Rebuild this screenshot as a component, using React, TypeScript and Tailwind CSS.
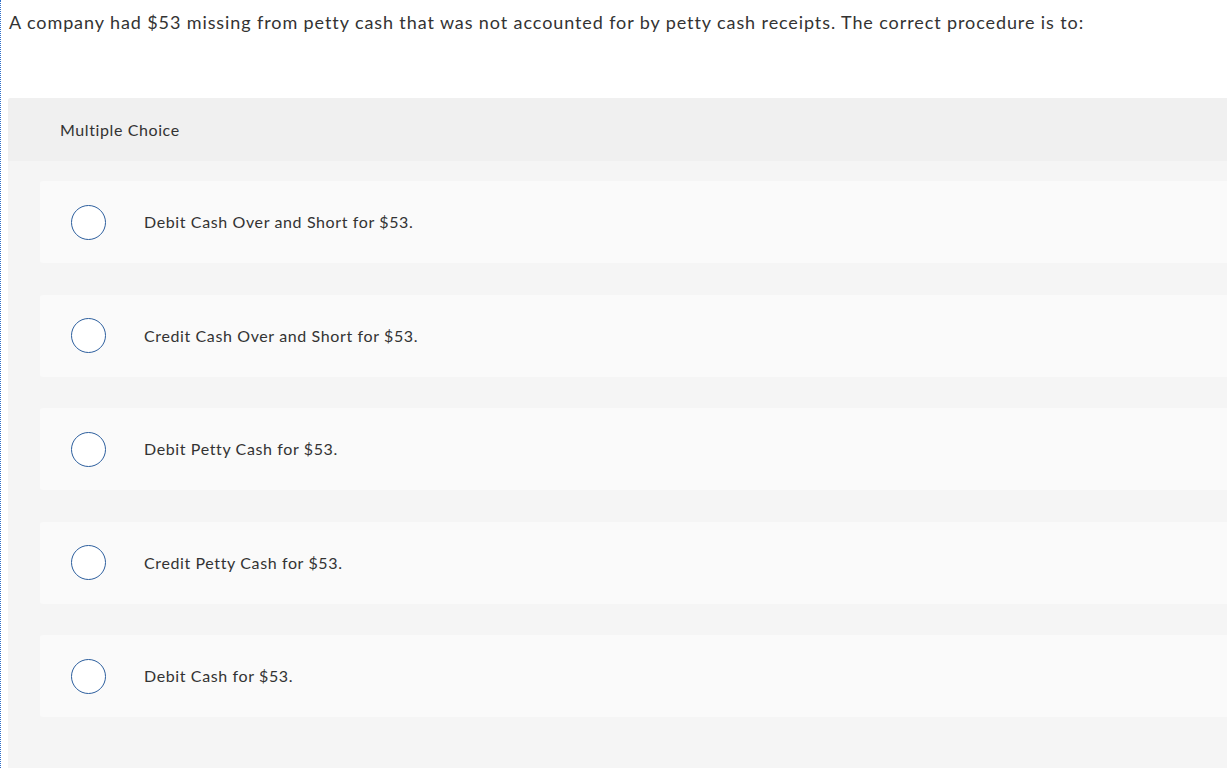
import React from "react";

const options = [
  "Debit Cash Over and Short for $53.",
  "Credit Cash Over and Short for $53.",
  "Debit Petty Cash for $53.",
  "Credit Petty Cash for $53.",
  "Debit Cash for $53.",
];

export default function App() {
  return (
    <div
      className="w-[1227px] h-[768px] overflow-hidden bg-white border-l border-dotted border-[#2f6fc9] text-[#333333]"
      style={{ fontFamily: '"Lato", "Open Sans", Arial, sans-serif' }}
    >
      <div className="pl-[8px] pt-[9px] h-[98px] text-[18px] leading-[26px] text-[#333333] tracking-[0.9px] whitespace-nowrap">
        A company had $53 missing from petty cash that was not accounted for by petty cash receipts. The correct procedure is to:
      </div>
      <div className="ml-[7px] h-[670px] bg-[#f5f5f5] rounded-tl-[3px] overflow-hidden">
        <div className="h-[63px] bg-[#f0f0f0] pl-[52px] flex items-center text-[16px] tracking-[0.6px] text-[#333333]">
          Multiple Choice
        </div>
        <div className="pt-[20px] pl-[32px] flex flex-col gap-[31.5px]">
          {options.map((o) => (
            <div key={o} className="h-[82px] bg-[#fafafa] rounded-l-[3px] flex items-center">
              <div className="ml-[31px] w-[35px] h-[35px] rounded-full bg-white border-[1.5px] border-[#2d5f9e] shrink-0" />
              <div className="ml-[38px] text-[16px] tracking-[0.62px] text-[#333333]">{o}</div>
            </div>
          ))}
        </div>
      </div>
    </div>
  );
}
